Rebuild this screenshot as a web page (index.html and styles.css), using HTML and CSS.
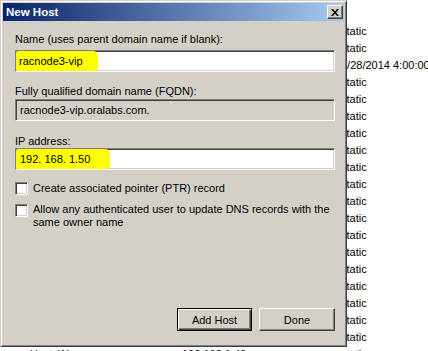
FILE: index.html
```html
<!DOCTYPE html>
<html lang="en">

<head>
    <meta charset="UTF-8">
    <title>New Host</title>
    <link rel="stylesheet" href="styles.css">
</head>

<body>

    <!-- DNS records list behind the dialog (only the columns that show) -->
    <div class="records">
        <div class="rec"><span></span><span></span><span>static</span></div>
        <div class="rec"><span></span><span></span><span>static</span></div>
        <div class="rec"><span></span><span></span><span>5/28/2014 4:00:00 AM</span></div>
        <div class="rec"><span></span><span></span><span>static</span></div>
        <div class="rec"><span></span><span></span><span>static</span></div>
        <div class="rec"><span></span><span></span><span>static</span></div>
        <div class="rec"><span></span><span></span><span>static</span></div>
        <div class="rec"><span></span><span></span><span>static</span></div>
        <div class="rec"><span></span><span></span><span>static</span></div>
        <div class="rec"><span></span><span></span><span>static</span></div>
        <div class="rec"><span></span><span></span><span>static</span></div>
        <div class="rec"><span></span><span></span><span>static</span></div>
        <div class="rec"><span></span><span></span><span>static</span></div>
        <div class="rec"><span></span><span></span><span>static</span></div>
        <div class="rec"><span></span><span></span><span>static</span></div>
        <div class="rec"><span></span><span></span><span>static</span></div>
        <div class="rec"><span></span><span></span><span>static</span></div>
        <div class="rec"><span></span><span></span><span>static</span></div>
        <div class="rec"><span></span><span></span><span>static</span></div>
        <div class="rec"><span>Host (A)</span><span>192.168.1.40</span><span>static</span></div>
    </div>

    <div class="dialog">
        <div class="titlebar">
            <span class="title">New Host</span>
            <button class="close" type="button">
                <svg width="8" height="7" viewBox="0 0 8 7">
                    <path d="M0 0h2l2 2.5L6 0h2L5 3.5L8 7H6L4 4.5L2 7H0l3-3.5z" fill="#000"/>
                </svg>
            </button>
        </div>

        <div class="dialog-body">
            <!-- Name -->
            <div class="lbl">Name (uses parent domain name if blank):</div>
            <div class="field field-name"><span class="mark mark-name">racnode3-vip</span></div>

            <!-- FQDN -->
            <div class="lbl lbl-fqdn">Fully qualified domain name (FQDN):</div>
            <div class="field field-ro"><span class="ro-text">racnode3-vip.oralabs.com.</span></div>

            <!-- IP address -->
            <div class="lbl lbl-ip">IP address:</div>
            <div class="field"><span class="mark mark-ip">192. 168. 1.50</span></div>

            <!-- Options -->
            <div class="check check-ptr">
                <span class="box"></span>
                <span>Create associated pointer (PTR) record</span>
            </div>
            <div class="check check-auth">
                <span class="box"></span>
                <span class="check-text">Allow any authenticated user to update DNS records with the same owner name</span>
            </div>

            <div class="buttons">
                <button class="btn btn-default" type="button">Add Host</button>
                <button class="btn btn-done" type="button">Done</button>
            </div>
        </div>
    </div>

</body>

</html>
```

FILE: styles.css
```css
body {
  margin: 0;
  height: 351px;
  overflow: hidden;
  position: relative;
  background-color: #ffffff;
  font-family: "Liberation Sans", Arial, sans-serif;
  font-size: 11px;
  color: #000;
}

/* list behind the dialog */
.records {
  padding-top: 23px;
}
.rec {
  display: grid;
  grid-template-columns: 152px 159px auto;
  padding-left: 30px;
  height: 17px;
  line-height: 17px;
  white-space: nowrap;
}

/* dialog window */
.dialog {
  position: absolute;
  left: 0;
  top: 0;
  width: 347px;
  height: 347px;
  box-sizing: border-box;
  padding: 2px;
  display: flex;
  flex-direction: column;
  background-color: #d4d0c8;
  border: 1px solid;
  border-color: #d4d0c8 #404040 #404040 #d4d0c8;
  box-shadow: inset 1px 1px #ffffff, inset -1px -1px #808080;
}
.titlebar {
  height: 18px;
  display: flex;
  align-items: center;
  justify-content: space-between;
  padding: 0 1px 0 3px;
  background: linear-gradient(to right, #0a246a, #a6caf0);
}
.title {
  color: #ffffff;
  font-weight: bold;
  font-size: 11.5px;
}
.close {
  width: 16px;
  height: 14px;
  padding: 0;
  display: flex;
  align-items: center;
  justify-content: center;
  background-color: #d4d0c8;
  border: 1px solid;
  border-color: #ffffff #404040 #404040 #ffffff;
  box-shadow: inset -1px -1px #808080;
}

.dialog-body {
  flex: 1;
  display: flex;
  flex-direction: column;
  padding: 12px 9px 13px 12px;
}
.lbl {
  line-height: 13px;
}
.lbl-fqdn {
  margin-top: 13px;
}
.lbl-ip {
  margin-top: 14px;
}

/* sunken edit boxes */
.field {
  height: 22px;
  box-sizing: border-box;
  display: flex;
  align-items: stretch;
  background-color: #ffffff;
  border: 1px solid;
  border-color: #808080 #ffffff #ffffff #808080;
  box-shadow: inset 1px 1px #404040, inset -1px -1px #d4d0c8;
}
.field-name {
  margin-top: 4px;
}
.field-ro {
  margin-top: 1px;
  background-color: #d4d0c8;
}
.ro-text {
  line-height: 20px;
  padding-left: 4px;
}
.mark {
  line-height: 20px;
  background-color: #ffff00;
  border-radius: 2px 5px 4px 1px;
  white-space: pre;
}
.mark-name {
  padding: 0 15px 0 3px;
}
.mark-ip {
  padding: 0 20px 0 4px;
}

/* checkboxes */
.check {
  display: flex;
  align-items: flex-start;
  gap: 5px;
  line-height: 13px;
}
.check-ptr {
  margin-top: 12px;
}
.check-auth {
  margin-top: 9px;
}
.check-text {
  margin-top: -1px;
  width: 310px;
  flex: none;
}
.box {
  flex: none;
  width: 13px;
  height: 13px;
  box-sizing: border-box;
  background-color: #ffffff;
  border: 1px solid;
  border-color: #808080 #ffffff #ffffff #808080;
  box-shadow: inset 1px 1px #404040, inset -1px -1px #d4d0c8;
}

/* buttons */
.buttons {
  margin-top: auto;
  display: flex;
  justify-content: flex-end;
  gap: 7px;
}
.btn {
  width: 75px;
  height: 23px;
  padding: 0;
  font: inherit;
  color: #000;
  background-color: #d4d0c8;
  border: 1px solid;
  border-color: #ffffff #404040 #404040 #ffffff;
  box-shadow: inset -1px -1px #808080;
}
.btn-default {
  border-color: #000;
  box-shadow: inset 1px 1px #ffffff, inset -1px -1px #404040, inset -2px -2px #808080;
}
.btn-done {
  width: 76px;
}
```
